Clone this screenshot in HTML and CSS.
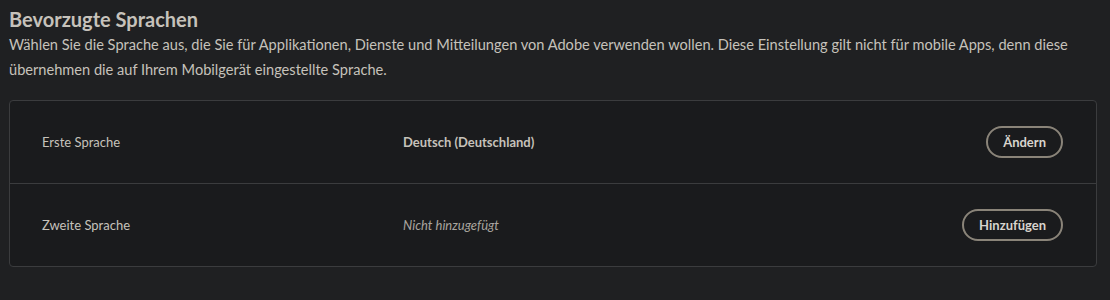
FILE: index.html
```html
<!DOCTYPE html>
<html lang="de">
<head>
  <meta charset="UTF-8">
  <title>Bevorzugte Sprachen</title>
  <link rel="stylesheet" href="styles.css">
</head>
<body>
  <section class="languages">
    <h2>Bevorzugte Sprachen</h2>
    <p class="intro">Wählen Sie die Sprache aus, die Sie für Applikationen, Dienste und Mitteilungen von Adobe verwenden wollen. Diese Einstellung gilt nicht für mobile Apps, denn diese übernehmen die auf Ihrem Mobilgerät eingestellte Sprache.</p>

    <div class="lang-card">
      <div class="lang-row">
        <span class="lang-label">Erste Sprache</span>
        <span class="lang-value">Deutsch (Deutschland)</span>
        <button class="pill">Ändern</button>
      </div>
      <div class="lang-row">
        <span class="lang-label">Zweite Sprache</span>
        <span class="lang-value empty">Nicht hinzugefügt</span>
        <button class="pill">Hinzufügen</button>
      </div>
    </div>
  </section>
</body>
</html>
```

FILE: styles.css
```css
/* styles.css */

body {
  margin: 0;
  background-color: #1f2022;
  font-family: Lato, 'Open Sans', sans-serif;
  color: #c6c2bb;
}

.languages {
  padding: 6px 13px 0 9px;
}

.languages h2 {
  margin: 0;
  font-size: 20px;
  font-weight: 700;
  line-height: 26px;
  color: #c6c2bb;
}

.intro {
  margin: 0 0 18px;
  font-size: 14.6px;
  line-height: 25px;
  color: #c6c2bb;
}

.lang-card {
  background-color: #1a1b1d;
  border: 1px solid #3b3c3e;
  border-radius: 4px;
}

.lang-row {
  display: grid;
  grid-template-columns: 361px 1fr auto;
  align-items: center;
  height: 82px;
  padding: 0 33px 0 32px;
  font-size: 13px;
}

.lang-row + .lang-row {
  border-top: 1px solid #3b3c3e;
}

.lang-value {
  font-weight: 700;
}

.lang-value.empty {
  font-weight: 400;
  font-style: italic;
  color: #a9a59f;
}

.pill {
  height: 32px;
  padding: 0 15px;
  background: transparent;
  border: 2px solid #8a8479;
  border-radius: 16px;
  color: #d8d4cd;
  font-family: Lato, 'Open Sans', sans-serif;
  font-size: 13px;
  font-weight: 700;
  cursor: pointer;
}
```
